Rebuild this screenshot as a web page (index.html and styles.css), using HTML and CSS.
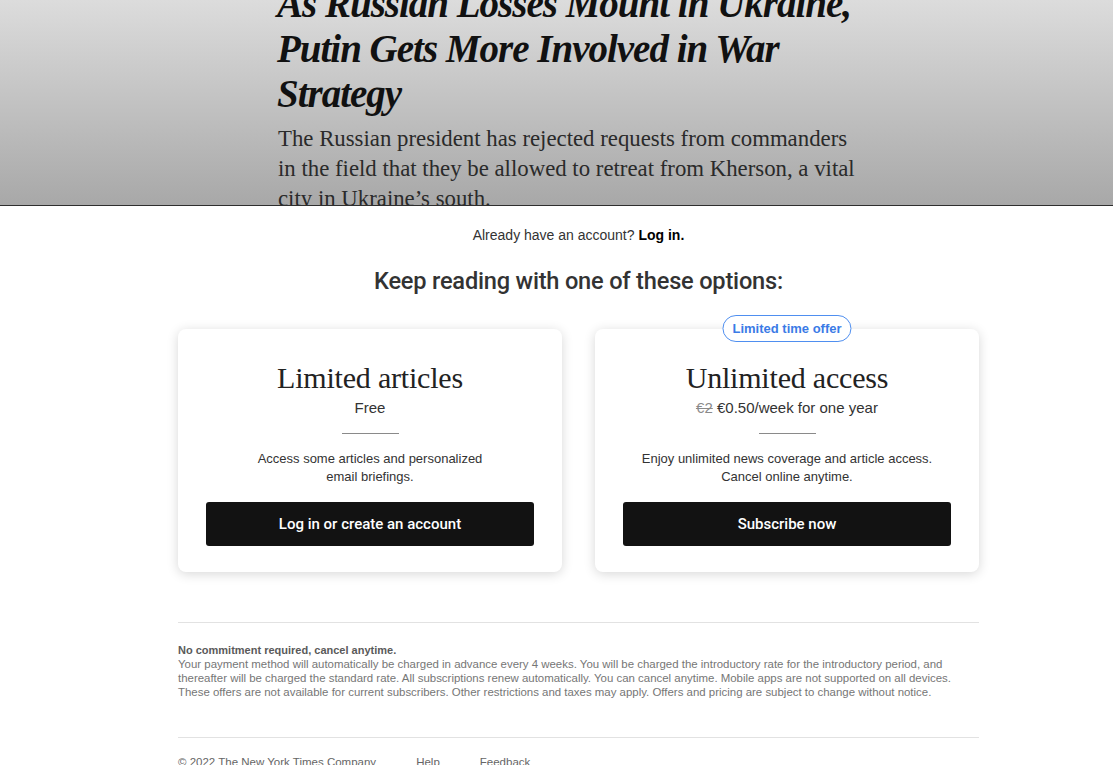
FILE: index.html
```html
<!DOCTYPE html>
<html lang="en">
<head>
<meta charset="utf-8">
<title>Keep reading</title>
<link rel="stylesheet" href="styles.css">
</head>
<body>
<div class="article-fade">
  <div class="article">
    <h1 class="headline">As Russian Losses Mount in Ukraine,<br>Putin Gets More Involved in War<br>Strategy</h1>
    <p class="summary">The Russian president has rejected requests from commanders<br>in the field that they be allowed to retreat from Kherson, a vital<br>city in Ukraine’s south.</p>
  </div>
</div>
<div class="paywall">
  <p class="login-line">Already have an account? <a class="login-link" href="#">Log in.</a></p>
  <h2 class="options-title">Keep reading with one of these options:</h2>
  <div class="cards">
    <div class="card">
      <h3 class="card-title">Limited articles</h3>
      <p class="card-price">Free</p>
      <hr class="card-rule">
      <p class="card-desc">Access some articles and personalized<br>email briefings.</p>
      <a class="card-btn" href="#">Log in or create an account</a>
    </div>
    <div class="card">
      <span class="badge">Limited time offer</span>
      <h3 class="card-title">Unlimited access</h3>
      <p class="card-price"><s class="old-price">€2</s> €0.50/week for one year</p>
      <hr class="card-rule">
      <p class="card-desc">Enjoy unlimited news coverage and article access.<br>Cancel online anytime.</p>
      <a class="card-btn" href="#">Subscribe now</a>
    </div>
  </div>
  <div class="fine-print">
    <p class="fine-title">No commitment required, cancel anytime.</p>
    <p class="fine-text">Your payment method will automatically be charged in advance every 4 weeks. You will be charged the introductory rate for the introductory period, and<br>thereafter will be charged the standard rate. All subscriptions renew automatically. You can cancel anytime. Mobile apps are not supported on all devices.<br>These offers are not available for current subscribers. Other restrictions and taxes may apply. Offers and pricing are subject to change without notice.</p>
  </div>
  <div class="footer">
    <span class="footer-copy">© 2022 The New York Times Company</span>
    <a class="footer-link" href="#">Help</a>
    <a class="footer-link" href="#">Feedback</a>
  </div>
</div>
</body>
</html>
```
FILE: styles.css
```css
html, body {
  margin: 0;
  padding: 0;
  background: #fff;
}
body {
  font-family: "Liberation Sans", Arial, sans-serif;
  color: #333;
  overflow: hidden;
}
.article-fade {
  height: 205px;
  overflow: hidden;
  background: linear-gradient(to bottom, #dcdcdc 0%, #a8a8a8 100%);
  border-bottom: 1px solid #2e2e2e;
}
.article {
  width: 620px;
  margin-left: 277px;
}
.headline {
  margin: -19px 0 0 0;
  font-family: "Liberation Serif", "Times New Roman", serif;
  font-style: italic;
  font-weight: 700;
  font-size: 39px;
  line-height: 45px;
  letter-spacing: -1px;
  color: #111;
  white-space: nowrap;
}
.summary {
  margin: 8px 0 0 1px;
  font-family: "Liberation Serif", "Times New Roman", serif;
  font-size: 22.8px;
  line-height: 30px;
  color: #2a2a2a;
  white-space: nowrap;
}
.paywall {
  width: 801px;
  margin-left: 178px;
  text-align: center;
}
.login-line {
  margin: 19px 0 0 0;
  font-size: 14px;
  line-height: 20px;
  color: #333;
}
.login-link {
  color: #000;
  font-weight: 700;
  text-decoration: none;
}
.options-title {
  margin: 21px 0 0 0;
  font-family: Roboto, "Liberation Sans", sans-serif;
  font-weight: 500;
  font-size: 23.6px;
  line-height: 30px;
  color: #333;
  letter-spacing: -0.2px;
}
.cards {
  display: flex;
  gap: 33px;
  margin-top: 33px;
}
.card {
  position: relative;
  flex: 1;
  background: #fff;
  border-radius: 8px;
  box-shadow: 0 2px 12px rgba(0, 0, 0, 0.16);
  padding: 32px 28px 26px;
  display: flex;
  flex-direction: column;
  align-items: center;
}
.badge {
  position: absolute;
  top: -14px;
  left: 50%;
  transform: translateX(-50%);
  background: #fff;
  border: 1px solid #4f8ff0;
  border-radius: 14px;
  height: 25px;
  line-height: 25px;
  padding: 0 9px;
  font-size: 13px;
  font-weight: 700;
  color: #3b7be6;
  white-space: nowrap;
}
.card-title {
  margin: 0;
  font-family: "Liberation Serif", "Times New Roman", serif;
  font-weight: 400;
  font-size: 30px;
  line-height: 34px;
  color: #222;
  letter-spacing: -0.2px;
}
.card-price {
  margin: 3px 0 0 0;
  font-size: 15px;
  line-height: 20px;
  color: #333;
}
.old-price {
  color: #8a8a8a;
}
.card-rule {
  width: 57px;
  height: 0;
  border: 0;
  border-top: 1px solid #8a8a8a;
  margin: 15px 0 0 0;
}
.card-desc {
  margin: 16px 0 0 0;
  font-size: 13px;
  line-height: 18px;
  color: #333;
}
.card-btn {
  align-self: stretch;
  margin-top: 16px;
  height: 44px;
  line-height: 44px;
  background: #121212;
  color: #fff;
  border-radius: 3px;
  text-decoration: none;
  font-family: Roboto, "Liberation Sans", sans-serif;
  font-weight: 500;
  font-size: 15px;
}
.fine-print {
  margin-top: 50px;
  border-top: 1px solid #e2e2e2;
  border-bottom: 1px solid #e2e2e2;
  padding: 20px 0 38px;
  text-align: left;
}
.fine-title {
  margin: 0;
  font-size: 11px;
  line-height: 14px;
  font-weight: 700;
  color: #5a5a5a;
}
.fine-text {
  margin: 0;
  font-size: 11.45px;
  line-height: 14px;
  color: #767676;
  white-space: nowrap;
}
.footer {
  display: flex;
  gap: 40px;
  padding-top: 17px;
  font-size: 11.5px;
  line-height: 14px;
  color: #666;
  text-align: left;
}
.footer-link {
  color: #666;
  text-decoration: none;
}
```
